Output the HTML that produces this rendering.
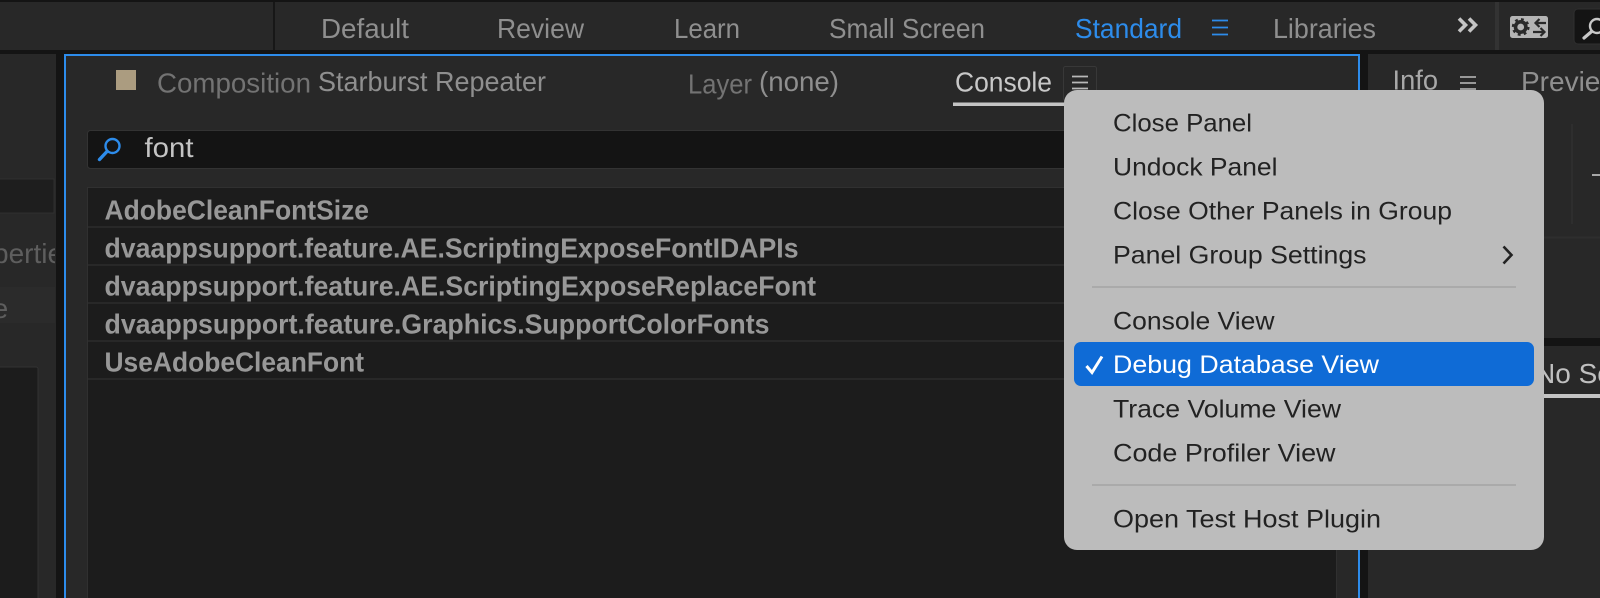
<!DOCTYPE html>
<html><head><meta charset="utf-8">
<style>
html,body{margin:0;padding:0;background:#141414;width:1600px;height:598px;overflow:hidden}
svg{display:block;position:absolute;left:0;top:0}
text{font-family:"Liberation Sans",sans-serif}
.t{font-size:28px;fill:#8f8f8f}
.l{font-size:27.5px;fill:#989898;font-weight:700}
.m{font-size:25px;fill:#222}
</style></head><body>
<svg width="1600" height="598" viewBox="0 0 1600 598" xmlns="http://www.w3.org/2000/svg">
<defs><clipPath id="lc"><rect x="0" y="54" width="55" height="544"/></clipPath><clipPath id="rc"><rect x="1368" y="54" width="232" height="544"/></clipPath></defs>
<rect width="1600" height="598" fill="#141414"/>
<!-- top bar -->
<rect x="0" y="2" width="1600" height="48" fill="#282828"/>
<rect x="273" y="2" width="2" height="48" fill="#171717"/>
<rect x="1495" y="2" width="4" height="48" fill="#333"/>
<text class="t" x="321" y="38" textLength="88" lengthAdjust="spacingAndGlyphs">Default</text>
<text class="t" x="497" y="38" textLength="87" lengthAdjust="spacingAndGlyphs">Review</text>
<text class="t" x="674" y="38" textLength="66" lengthAdjust="spacingAndGlyphs">Learn</text>
<text class="t" x="829" y="38" textLength="156" lengthAdjust="spacingAndGlyphs">Small Screen</text>
<text class="t" x="1075" y="38" textLength="107" lengthAdjust="spacingAndGlyphs" style="fill:#2d8ceb">Standard</text>
<text class="t" x="1273" y="38" textLength="103" lengthAdjust="spacingAndGlyphs">Libraries</text>
<path d="M1212 20.5h16M1212 27.5h16M1212 34.5h16" stroke="#2d8ceb" stroke-width="1.7" fill="none"/>
<path d="M1459 18.500l6.500 6.500-6.500 6.500M1469 18.500l6.500 6.500-6.500 6.500" stroke="#c4c4c4" stroke-width="3.600" fill="none"/>
<rect x="1510" y="16" width="38" height="22" rx="2.500" fill="#b4b4b4"/>
<circle cx="1520.700" cy="27" r="5.200" fill="none" stroke="#2a2a2a" stroke-width="3.600"/>
<circle cx="1520.700" cy="27" r="7.600" fill="none" stroke="#2a2a2a" stroke-width="2.600" stroke-dasharray="2.800 3.170"/>
<path d="M1546 23h-11M1539.500 19l-4 4 4 4M1533 32h11M1540.500 28l4 4-4 4" stroke="#2a2a2a" stroke-width="2.200" fill="none"/>
<rect x="1574" y="9" width="32" height="35" rx="4" fill="#141414" stroke="#2f2f2f" stroke-width="1"/>
<circle cx="1597" cy="26" r="7" fill="none" stroke="#c8c8c8" stroke-width="2.400"/>
<path d="M1591 32l-7 6" stroke="#c8c8c8" stroke-width="3.200" stroke-linecap="round"/>
<!-- left panel -->
<rect x="0" y="54" width="56" height="544" fill="#282828"/>
<rect x="-2" y="179" width="56" height="34" fill="#1e1e1e" stroke="#2f2f2f" stroke-width="1"/>
<rect x="0" y="287" width="55" height="36" fill="#2b2b2b"/>
<g clip-path="url(#lc)">
<text x="-7" y="263" style="font-size:28px;fill:#5e5e5e">pertie</text>
<text x="-23" y="318" style="font-size:28px;fill:#5e5e5e">ue</text>
</g>
<rect x="-2" y="367" width="40" height="240" rx="2" fill="#1c1c1c" stroke="#323232" stroke-width="1"/>
<!-- main panel -->
<rect x="65" y="55" width="1294" height="550" fill="#282828" stroke="#2d8ceb" stroke-width="2"/>
<rect x="116" y="70" width="20" height="20" fill="#ab9c80"/>
<text class="t" x="157" y="92.700" textLength="154" lengthAdjust="spacingAndGlyphs" style="fill:#737373">Composition</text>
<text class="t" x="318" y="91" textLength="228" lengthAdjust="spacingAndGlyphs">Starburst Repeater</text>
<text class="t" x="688" y="93.300" textLength="64" lengthAdjust="spacingAndGlyphs" style="fill:#737373">Layer</text>
<text class="t" x="759" y="91" textLength="80" lengthAdjust="spacingAndGlyphs">(none)</text>
<text class="t" x="955" y="91.700" textLength="97" lengthAdjust="spacingAndGlyphs" style="fill:#c8c8c8">Console</text>
<rect x="953" y="102.500" width="111" height="3.500" fill="#c4c4c4"/>
<rect x="1063.500" y="66.500" width="33" height="34" rx="2" fill="none" stroke="#383838"/>
<path d="M1072 76.500h16M1072 82.500h16M1072 88.500h16" stroke="#b8b8b8" stroke-width="1.700" fill="none"/>
<!-- search -->
<rect x="87.500" y="130.500" width="1249" height="38" rx="3" fill="#141414" stroke="#333"/>
<circle cx="112.500" cy="146" r="7" fill="none" stroke="#2d8ceb" stroke-width="2.400"/>
<path d="M106.500 152l-7 7.500" stroke="#2d8ceb" stroke-width="3.400" stroke-linecap="round"/>
<text x="144.500" y="157" textLength="49" lengthAdjust="spacingAndGlyphs" style="font-size:28px;fill:#c4c4c4">font</text>
<!-- list -->
<rect x="87.500" y="187.500" width="1249" height="420" fill="#1c1c1c" stroke="#303030"/>
<path d="M88 227h1248M88 265h1248M88 303h1248M88 341h1248M88 379h1248" stroke="#2c2c2c" stroke-width="1.500"/>
<text class="l" x="104.500" y="219.500" textLength="264.500" lengthAdjust="spacingAndGlyphs">AdobeCleanFontSize</text>
<text class="l" x="104.500" y="257.500" textLength="694" lengthAdjust="spacingAndGlyphs">dvaappsupport.feature.AE.ScriptingExposeFontIDAPIs</text>
<text class="l" x="104.500" y="295.500" textLength="711.500" lengthAdjust="spacingAndGlyphs">dvaappsupport.feature.AE.ScriptingExposeReplaceFont</text>
<text class="l" x="104.500" y="333.500" textLength="665" lengthAdjust="spacingAndGlyphs">dvaappsupport.feature.Graphics.SupportColorFonts</text>
<text class="l" x="104.500" y="371.500" textLength="259.500" lengthAdjust="spacingAndGlyphs">UseAdobeCleanFont</text>
<!-- right panel -->
<rect x="1368" y="54" width="232" height="284" fill="#282828"/>
<rect x="1368" y="346" width="232" height="252" fill="#282828"/>
<text class="t" x="1392.500" y="89.500" textLength="45.500" lengthAdjust="spacingAndGlyphs" style="fill:#a8a8a8">Info</text>
<path d="M1460 77h16M1460 83h16M1460 89h16" stroke="#a8a8a8" stroke-width="1.700" fill="none"/>
<g clip-path="url(#rc)"><text class="t" x="1521" y="91" style="fill:#8f8f8f">Preview</text></g>
<rect x="1571" y="124" width="2" height="100" fill="#2e2e2e"/>
<rect x="1368" y="236.500" width="232" height="2" fill="#2e2e2e"/>
<rect x="1592" y="174" width="8" height="2" fill="#a8a8a8"/>
<text class="t" x="1535" y="383" style="fill:#c0c0c0">No Se</text>
<rect x="1544" y="394" width="56" height="4" fill="#c4c4c4"/>
<!-- menu -->
<rect x="1064" y="90" width="480" height="460" rx="13" fill="#bcbcbc"/>
<rect x="1074" y="342" width="460" height="44" rx="7" fill="#0f6bd6"/>
<path d="M1092 287h424M1092 485h424" stroke="#a3a3a3" stroke-width="1.500"/>
<text class="m" x="1113" y="131.700" textLength="139" lengthAdjust="spacingAndGlyphs">Close Panel</text>
<text class="m" x="1113" y="175.700" textLength="164.500" lengthAdjust="spacingAndGlyphs">Undock Panel</text>
<text class="m" x="1113" y="219.700" textLength="339" lengthAdjust="spacingAndGlyphs">Close Other Panels in Group</text>
<text class="m" x="1113" y="263.300" textLength="253.500" lengthAdjust="spacingAndGlyphs">Panel Group Settings</text>
<path d="M1503.500 246.500l8 8.500-8 8.500" stroke="#222" stroke-width="2.600" fill="none"/>
<text class="m" x="1113" y="329.300" textLength="161.500" lengthAdjust="spacingAndGlyphs">Console View</text>
<path d="M1086.500 366l5.500 6.500 10-16" stroke="#fff" stroke-width="3" fill="none"/>
<text class="m" x="1113" y="373" textLength="266" lengthAdjust="spacingAndGlyphs" style="fill:#fff">Debug Database View</text>
<text class="m" x="1113" y="417.700" textLength="228" lengthAdjust="spacingAndGlyphs">Trace Volume View</text>
<text class="m" x="1113" y="461.700" textLength="222.500" lengthAdjust="spacingAndGlyphs">Code Profiler View</text>
<text class="m" x="1113" y="527.700" textLength="268" lengthAdjust="spacingAndGlyphs">Open Test Host Plugin</text>
</svg>
</body></html>
